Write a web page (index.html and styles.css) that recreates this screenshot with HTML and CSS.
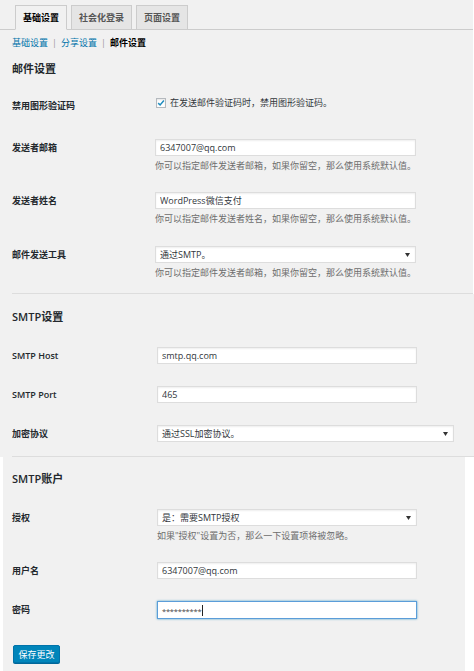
FILE: index.html
```html
<!DOCTYPE html>
<html>
  <head>
    <meta charset="utf-8">
    <link rel="stylesheet" href="styles.css">
  </head>
  <body>
    <div class="panel panel-mail">
      <nav class="tabs">
        <a class="tab active">基础设置</a>
        <a class="tab">社会化登录</a>
        <a class="tab">页面设置</a>
      </nav>
      <ul class="subsub">
        <li><a class="link">基础设置</a><span class="sep">|</span></li>
        <li><a class="link">分享设置</a><span class="sep">|</span></li>
        <li><span class="current">邮件设置</span></li>
      </ul>
      <h2 class="section-title">邮件设置</h2>
      <div class="form-table">
        <div class="row row-check">
          <div class="label">禁用图形验证码</div>
          <div class="field">
            <label class="check">
              <span class="checkbox">
                <svg width="8" height="8" viewBox="0 0 8 8"><path d="M1.2 4.1 L3.1 6 L6.9 1.6" fill="none" stroke="#1e8cbe" stroke-width="1.5"/></svg>
              </span>
              在发送邮件验证码时，禁用图形验证码。
            </label>
          </div>
        </div>
        <div class="row row-first">
          <div class="label">发送者邮箱</div>
          <div class="field">
            <input class="input" type="text" value="6347007@qq.com">
            <p class="desc">你可以指定邮件发送者邮箱，如果你留空，那么使用系统默认值。</p>
          </div>
        </div>
        <div class="row">
          <div class="label">发送者姓名</div>
          <div class="field">
            <input class="input" type="text" value="WordPress微信支付">
            <p class="desc">你可以指定邮件发送者姓名，如果你留空，那么使用系统默认值。</p>
          </div>
        </div>
        <div class="row row-wide-gap">
          <div class="label">邮件发送工具</div>
          <div class="field">
            <div class="select">
              <span>通过SMTP。</span>
              <svg class="arrow" width="5" height="4" viewBox="0 0 5 4"><path d="M0 0 H5 L2.5 4 Z" fill="#333"/></svg>
            </div>
            <p class="desc">你可以指定邮件发送者邮箱，如果你留空，那么使用系统默认值。</p>
          </div>
        </div>
      </div>
      <hr class="divider">
    </div>

    <div class="panel panel-smtp">
      <h2 class="section-title">SMTP设置</h2>
      <div class="form-table">
        <div class="row">
          <div class="label">SMTP Host</div>
          <div class="field">
            <input class="input" type="text" value="smtp.qq.com">
          </div>
        </div>
        <div class="row">
          <div class="label">SMTP Port</div>
          <div class="field">
            <input class="input" type="text" value="465">
          </div>
        </div>
        <div class="row">
          <div class="label">加密协议</div>
          <div class="field">
            <div class="select select-long">
              <span>通过SSL加密协议。</span>
              <svg class="arrow" width="5" height="4" viewBox="0 0 5 4"><path d="M0 0 H5 L2.5 4 Z" fill="#333"/></svg>
            </div>
          </div>
        </div>
      </div>
      <hr class="divider">
    </div>

    <div class="panel panel-account">
      <h2 class="section-title">SMTP账户</h2>
      <div class="form-table">
        <div class="row">
          <div class="label">授权</div>
          <div class="field">
            <div class="select">
              <span>是：需要SMTP授权</span>
              <svg class="arrow" width="5" height="4" viewBox="0 0 5 4"><path d="M0 0 H5 L2.5 4 Z" fill="#333"/></svg>
            </div>
            <p class="desc">如果"授权"设置为否，那么一下设置项将被忽略。</p>
          </div>
        </div>
        <div class="row row-first">
          <div class="label">用户名</div>
          <div class="field">
            <input class="input" type="text" value="6347007@qq.com">
          </div>
        </div>
        <div class="row">
          <div class="label">密码</div>
          <div class="field">
            <div class="input input-focus"><span class="stars">**********</span><span class="caret"></span></div>
          </div>
        </div>
      </div>
      <button class="btn-primary">保存更改</button>
    </div>
  </body>
</html>
```

FILE: styles.css
```css
* {
  margin: 0;
  padding: 0;
  box-sizing: border-box;
}
body {
  background-color: #fff;
  font-family: "Open Sans", "Noto Sans CJK SC", sans-serif;
  font-size: 9px;
  color: #23282d;
}
.panel {
  background-color: #f1f1f1;
}
.panel-mail {
  width: 473px;
  padding-top: 5px;
}
.panel-smtp {
  width: 474px;
  padding-top: 15px;
}
.panel-account {
  width: 462px;
  margin-left: 3px;
  padding: 14px 0 11px 9px;
}

/* tabs */
.tabs {
  display: flex;
  padding-left: 15px;
  border-bottom: 1px solid #ccc;
}
.tab {
  height: 25px;
  line-height: 23px;
  padding: 0 7px;
  margin-right: 4px;
  margin-bottom: -1px;
  border: 1px solid #ccc;
  background-color: #e5e5e5;
  color: #555;
  font-weight: 600;
  font-size: 9px;
}
.tab.active {
  background-color: #f1f1f1;
  border-bottom-color: #f1f1f1;
  color: #000;
}

/* sub links */
.subsub {
  list-style: none;
  display: flex;
  margin: 6px 0 0 12px;
  line-height: 14px;
}
.subsub .link {
  color: #0073aa;
}
.subsub .sep {
  color: #999;
  margin: 0 4px;
}
.subsub .current {
  font-weight: 600;
  color: #000;
}

.section-title {
  font-size: 11px;
  font-weight: 600;
  line-height: 16px;
  color: #23282d;
  margin-left: 12px;
}
.panel-mail .section-title {
  margin-top: 11px;
}
.panel-account .section-title {
  margin-left: 0;
}

/* form rows */
.row {
  display: flex;
  align-items: flex-start;
  margin-top: 19px;
}
.panel-smtp .row,
.panel-account .row {
  margin-top: 22px;
}
.panel-account .row-first {
  margin-top: 19px;
}
.row-check {
  margin-top: 17px;
}
.row-first {
  margin-top: 25px;
}
.row-wide-gap {
  margin-top: 20px;
}
.label {
  flex-shrink: 0;
  width: 155px;
  padding-left: 12px;
  line-height: 17px;
  font-weight: 600;
  color: #23282d;
}
.panel-smtp .label {
  width: 157px;
}
.panel-account .label {
  width: 145px;
  padding-left: 0;
}
.row-check .label {
  margin-top: 3px;
}
.field {
  flex: 1;
}

.check {
  display: flex;
  align-items: center;
  height: 17px;
  color: #32373c;
}
.checkbox {
  width: 10px;
  height: 10px;
  margin: 0 4px 0 1px;
  border: 1px solid #b4b9be;
  background-color: #fff;
  display: flex;
  align-items: center;
  justify-content: center;
  box-shadow: inset 0 1px 2px rgba(0, 0, 0, 0.1);
}

.input,
.select {
  width: 261px;
  height: 17px;
  border: 1px solid #ddd;
  background-color: #fff;
  box-shadow: inset 0 1px 2px rgba(0, 0, 0, 0.07);
  padding: 0 4px;
  font-family: "Open Sans", "Noto Sans CJK SC", sans-serif;
  font-size: 9px;
  color: #32373c;
  outline: none;
  display: block;
}
.panel-smtp .input,
.panel-smtp .select,
.panel-account .input,
.panel-account .select {
  width: 260px;
}
.select {
  display: flex;
  align-items: center;
  justify-content: space-between;
  padding: 0 5px 0 4px;
}
.panel-smtp .select-long {
  width: 297px;
}
.input-focus {
  display: flex;
  align-items: center;
  height: 18px;
  border-color: #5b9dd9;
  box-shadow: 0 0 2px rgba(30, 140, 190, 0.8);
}
.stars {
  font-size: 7.5px;
  letter-spacing: -0.2px;
  color: #444;
  line-height: 1;
  padding-top: 4px;
}
.caret {
  width: 1px;
  height: 11px;
  background-color: #222;
  margin-left: 1px;
}
.desc {
  margin-top: 3px;
  line-height: 14px;
  color: #6d6d6d;
  font-size: 9px;
}

.divider {
  border: none;
  border-top: 1px solid #ddd;
  margin-left: 12px;
}
.panel-mail .divider {
  margin-top: 13px;
}
.panel-smtp .divider {
  margin-top: 14px;
}

.btn-primary {
  margin: 26px 0 0 1px;
  height: 18px;
  width: 47px;
  background-color: #0085ba;
  border: 1px solid #0073aa;
  border-radius: 2px;
  color: #fff;
  font-family: "Open Sans", "Noto Sans CJK SC", sans-serif;
  font-size: 9px;
  box-shadow: 0 1px 0 #006799;
  display: block;
}
```
